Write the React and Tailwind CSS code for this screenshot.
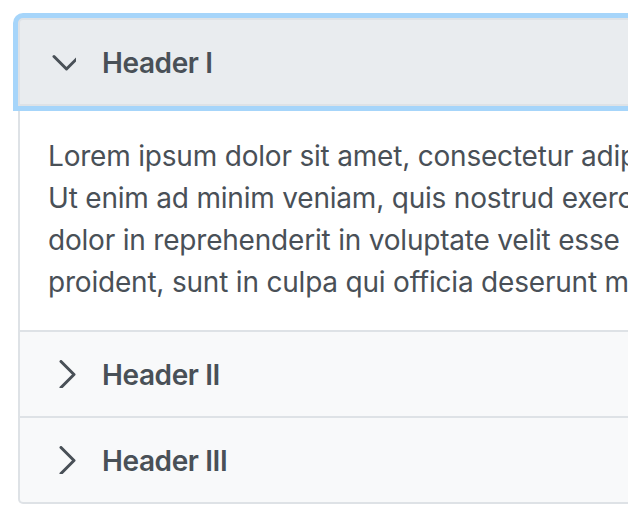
import React from "react";

const font = { fontFamily: "Inter, 'Noto Sans', sans-serif" };

function ChevronDown() {
  return (
    <svg width="28" height="28" viewBox="0 0 28 28" className="shrink-0" fill="none">
      <path d="M6 8.5 L18.5 21 L31 8.5" stroke="#495057" strokeWidth="3" strokeLinecap="round" strokeLinejoin="round" />
    </svg>
  );
}

function ChevronRight() {
  return (
    <svg width="28" height="28" viewBox="0 0 28 28" className="shrink-0" fill="none">
      <path d="M13 1.5 L26 14.5 L13 27.5" stroke="#495057" strokeWidth="3" strokeLinecap="round" strokeLinejoin="round" />
    </svg>
  );
}

const lines = [
  "Lorem ipsum dolor sit amet, consectetur adipiscing elit, sed do eiusmod tempor incididunt ut labore et dolore magna aliqua.",
  "Ut enim ad minim veniam, quis nostrud exercitation ullamco laboris nisi ut aliquip ex ea commodo consequat. Duis aute irure",
  "dolor in reprehenderit in voluptate velit esse cillum dolore eu fugiat nulla pariatur. Excepteur sint occaecat cupidatat non",
  "proident, sunt in culpa qui officia deserunt mollit anim id est laborum.",
];

export default function App() {
  return (
    <div className="w-[628px] h-[526px] overflow-hidden bg-white pl-[18px] pt-[18px]" style={font}>
      <div className="w-[1800px]">
        <div className="relative z-10 flex items-center h-[88px] px-[28px] bg-[#e9ecef] border-2 border-[#dee2e6] rounded-t-[5px] shadow-[0_0_0_5px_#a6d5fa] text-[#495057] text-[28px] font-semibold">
          <ChevronDown />
          <span className="ml-[26px] leading-[28px] pt-[2px] tracking-[-0.4px]">Header I</span>
        </div>
        <div className="bg-white border-2 border-t-0 border-[#dee2e6] px-[28px] pt-[29px] pb-[27px] text-[#495057] text-[28px] leading-[42px] tracking-[-0.2px]">
          {lines.map((l, i) => (
            <div key={i} className="whitespace-nowrap">{l}</div>
          ))}
        </div>
        <div className="flex items-center h-[86px] px-[28px] bg-[#f8f9fa] border-2 border-t-0 border-[#dee2e6] text-[#495057] text-[28px] font-semibold">
          <ChevronRight />
          <span className="ml-[26px] leading-[28px] pt-[2px] tracking-[-0.4px]">Header II</span>
        </div>
        <div className="flex items-center h-[86px] px-[28px] bg-[#f8f9fa] border-2 border-t-0 border-[#dee2e6] rounded-b-[5px] text-[#495057] text-[28px] font-semibold">
          <ChevronRight />
          <span className="ml-[26px] leading-[28px] pt-[2px] tracking-[-0.4px]">Header III</span>
        </div>
      </div>
    </div>
  );
}
